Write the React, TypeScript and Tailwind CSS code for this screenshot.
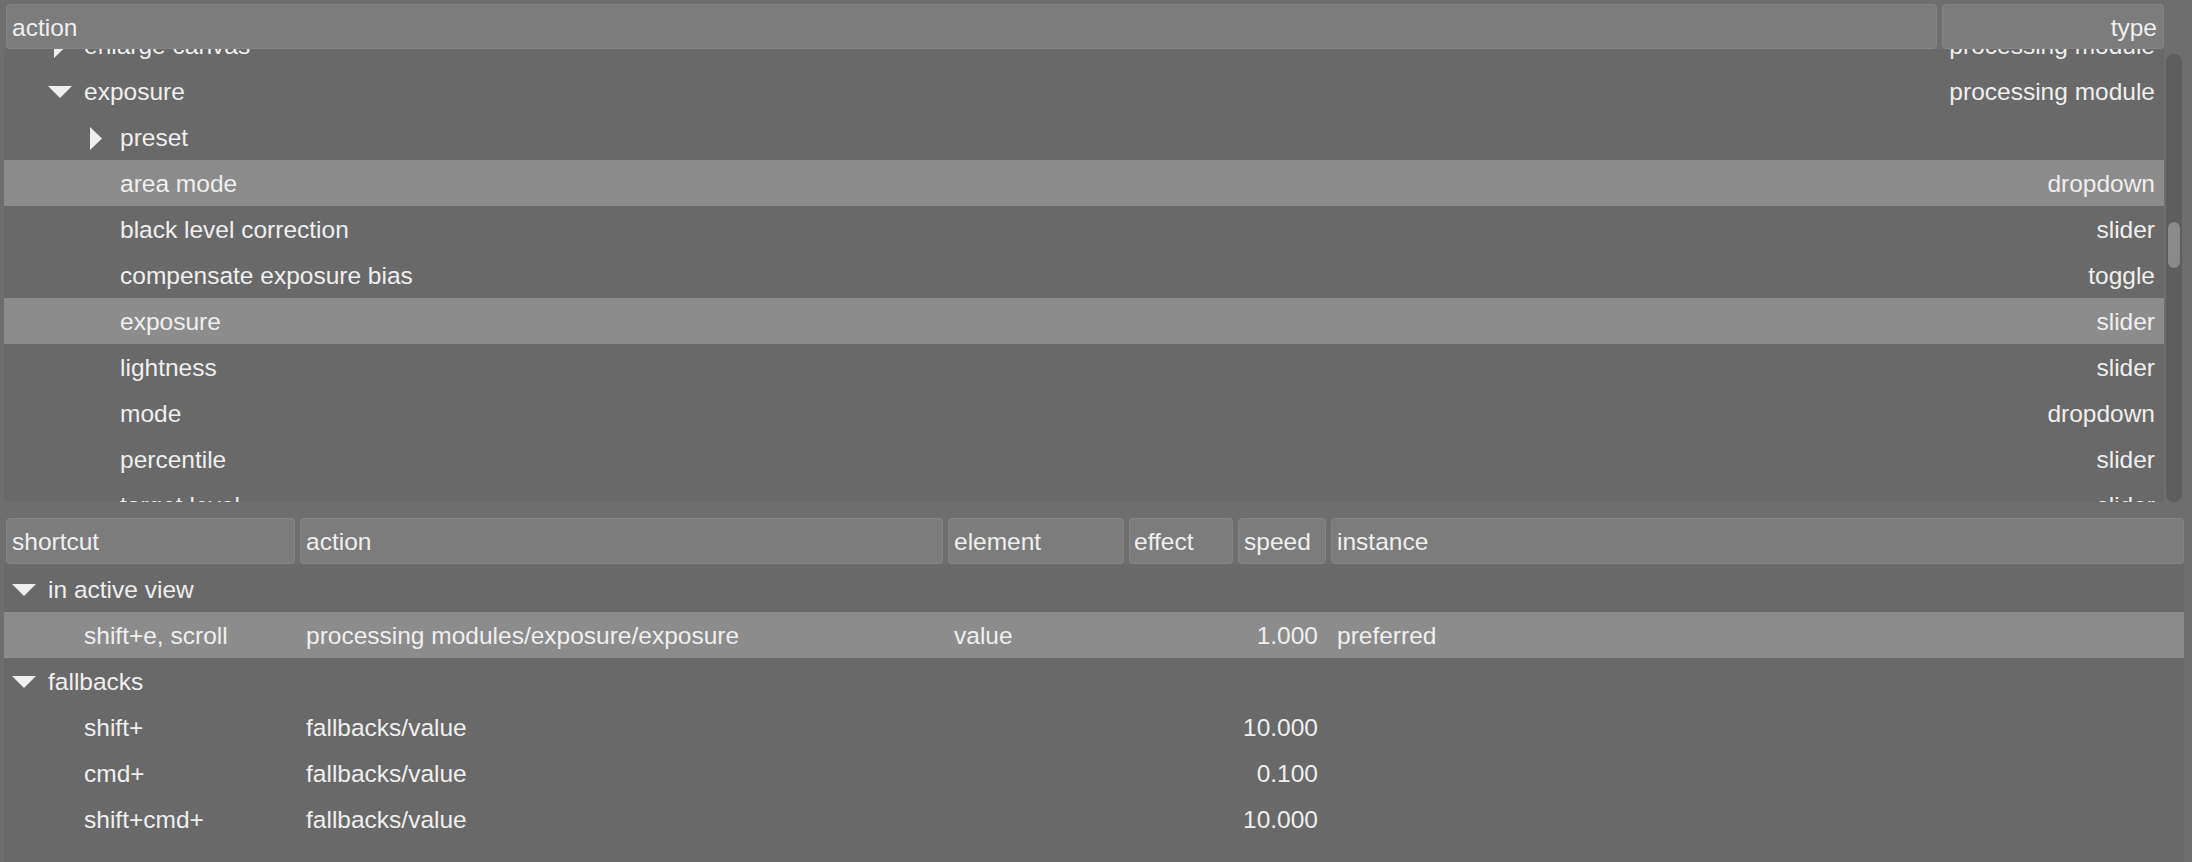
type TreeRow = {
  label: string;
  type?: string;
  level: 1 | 2;
  arrow?: "down" | "right";
  selected?: boolean;
};

const ACTIONS: TreeRow[] = [
  { label: "enlarge canvas", type: "processing module", level: 1, arrow: "right" },
  { label: "exposure", type: "processing module", level: 1, arrow: "down" },
  { label: "preset", level: 2, arrow: "right" },
  { label: "area mode", type: "dropdown", level: 2, selected: true },
  { label: "black level correction", type: "slider", level: 2 },
  { label: "compensate exposure bias", type: "toggle", level: 2 },
  { label: "exposure", type: "slider", level: 2, selected: true },
  { label: "lightness", type: "slider", level: 2 },
  { label: "mode", type: "dropdown", level: 2 },
  { label: "percentile", type: "slider", level: 2 },
  { label: "target level", type: "slider", level: 2 },
];

type ShortcutRow = {
  shortcut: string;
  group?: boolean;
  action?: string;
  element?: string;
  speed?: string;
  instance?: string;
  selected?: boolean;
};

const SHORTCUTS: ShortcutRow[] = [
  { shortcut: "in active view", group: true },
  {
    shortcut: "shift+e, scroll",
    action: "processing modules/exposure/exposure",
    element: "value",
    speed: "1.000",
    instance: "preferred",
    selected: true,
  },
  { shortcut: "fallbacks", group: true },
  { shortcut: "shift+", action: "fallbacks/value", speed: "10.000" },
  { shortcut: "cmd+", action: "fallbacks/value", speed: "0.100" },
  { shortcut: "shift+cmd+", action: "fallbacks/value", speed: "10.000" },
];

function Arrow({ dir }: { dir?: "down" | "right" }) {
  return (
    <span className="flex w-[24px] shrink-0 items-center justify-center">
      {dir === "down" && (
        <svg width="24" height="12" viewBox="0 0 24 12">
          <polygon points="0,0 24,0 12,12" fill="#efefef" />
        </svg>
      )}
      {dir === "right" && (
        <svg width="12" height="23" viewBox="0 0 12 23">
          <polygon points="0,0 12,11.5 0,23" fill="#efefef" />
        </svg>
      )}
    </span>
  );
}

function HeaderBox({ label, className }: { label: string; className: string }) {
  return (
    <div
      className={`h-full rounded-[4px] border border-[#858585] bg-[#7c7c7c] pt-[1px] leading-[43px] text-[#efefef] ${className}`}
    >
      {label}
    </div>
  );
}

export default function App() {
  return (
    <div
      className="flex h-[862px] w-[2192px] flex-col overflow-hidden bg-[#6e6e6e] pl-[4px] pt-[4px] text-[24.5px] text-[#efefef]"
      style={{ fontFamily: '"Liberation Sans", Arial, sans-serif' }}
    >
      {/* action tree */}
      <div className="ml-[2px] flex h-[45px] w-[2158px] gap-[5px]">
        <HeaderBox label="action" className="flex-1 pl-[5px]" />
        <HeaderBox label="type" className="w-[222px] pr-[6px] text-right" />
      </div>
      <div className="flex h-[453px]">
        <div className="h-full w-[2160px] overflow-hidden bg-[#696969]">
          <div className="-mt-[27px]">
            {ACTIONS.map((row, i) => (
              <div
                key={i}
                className={`flex h-[46px] items-center pr-[9px] pt-[2px] leading-[44px] ${
                  row.selected ? "bg-[#8c8c8c]" : ""
                } ${row.level === 1 ? "pl-[44px]" : "pl-[80px]"}`}
              >
                <Arrow dir={row.arrow} />
                <span className="ml-[12px] flex-1 whitespace-nowrap">{row.label}</span>
                <span className="whitespace-nowrap">{row.type}</span>
              </div>
            ))}
          </div>
        </div>
        <div className="ml-[2px] mt-[5px] flex h-[448px] w-[16px] flex-col rounded-full bg-[#5e5e5e] px-[2px]">
          <div className="mt-[168px] h-[46px] rounded-full bg-[#8a8a8a]" />
        </div>
      </div>

      {/* shortcuts */}
      <div className="mt-[16px] ml-[2px] flex h-[46px] w-[2178px] gap-[5px]">
        <HeaderBox label="shortcut" className="w-[289px] pl-[5px]" />
        <HeaderBox label="action" className="w-[643px] pl-[5px]" />
        <HeaderBox label="element" className="w-[176px] pl-[5px]" />
        <HeaderBox label="effect" className="w-[104px] pl-[4px]" />
        <HeaderBox label="speed" className="w-[88px] pl-[5px]" />
        <HeaderBox label="instance" className="flex-1 pl-[5px]" />
      </div>
      <div className="w-[2180px] flex-1 bg-[#696969] pt-[2px]">
        {SHORTCUTS.map((row, i) => (
          <div
            key={i}
            className={`flex h-[46px] items-center pt-[1px] leading-[45px] ${row.selected ? "bg-[#8c8c8c]" : ""}`}
          >
            <div className={`flex w-[296px] shrink-0 items-center ${row.group ? "pl-[8px]" : "pl-[44px]"}`}>
              <Arrow dir={row.group ? "down" : undefined} />
              <span className="ml-[12px] whitespace-nowrap">{row.shortcut}</span>
            </div>
            <div className="w-[648px] shrink-0 whitespace-nowrap pl-[6px]">{row.action}</div>
            <div className="w-[181px] shrink-0 whitespace-nowrap pl-[6px]">{row.element}</div>
            <div className="w-[109px] shrink-0" />
            <div className="w-[93px] shrink-0 whitespace-nowrap pr-[13px] text-right">{row.speed}</div>
            <div className="flex-1 whitespace-nowrap pl-[6px]">{row.instance}</div>
          </div>
        ))}
      </div>
    </div>
  );
}
